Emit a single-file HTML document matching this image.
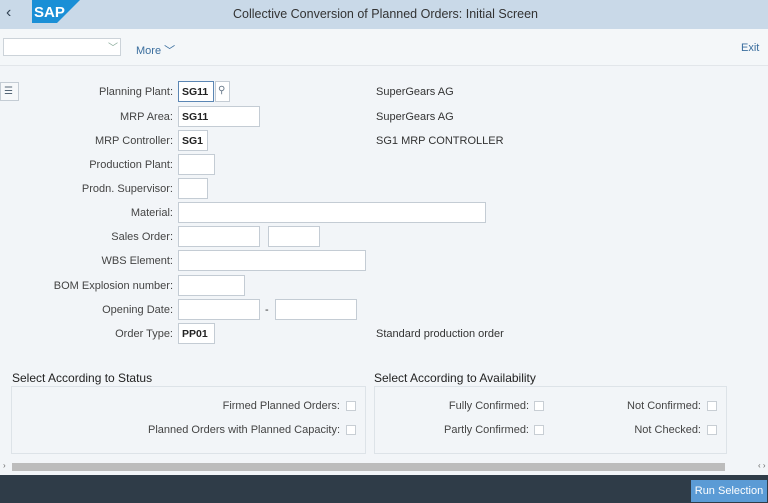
<!DOCTYPE html><html><head><style>
*{box-sizing:border-box;margin:0;padding:0}
body{width:768px;height:503px;overflow:hidden;background:#f2f5f8;font-family:"Liberation Sans",sans-serif;font-size:11px;color:#333;position:relative}
.a{position:absolute}
.hdr{left:0;top:0;width:768px;height:29px;background:#c9d9e8}
.inp{position:absolute;height:21px;background:#fff;border:1px solid #c4ccd4;font-weight:bold;font-size:10.5px;padding:4px 3px;color:#222}
.lbl{position:absolute;text-align:right;width:173px;left:0;color:#444}
.box{position:absolute;border:1px solid #dde3e8;background:#f2f5f8}
.cb{position:absolute;width:10px;height:10px;border:1px solid #c8ced4;background:#fff}
.t{position:absolute;color:#444;text-align:right}
</style></head><body>
<div class="a hdr"></div>
<div class="a" style="left:6px;top:4px;font-size:16px;color:#345">‹</div>
<svg class="a" style="left:32px;top:0" width="48" height="23"><polygon points="0,0 48,0 25,23 0,23" fill="#1a8fd6"/><text x="2" y="17" font-family="Liberation Sans" font-weight="bold" font-size="15" fill="#fff">SAP</text></svg>
<div class="a" style="left:233px;top:7px;font-size:12.5px;color:#333">Collective Conversion of Planned Orders: Initial Screen</div>
<div class="a" style="left:0;top:29px;width:768px;height:37px;background:#f4f7f9;border-bottom:1px solid #e2e6ea"></div>
<div class="a" style="left:3px;top:38px;width:118px;height:18px;background:#fff;border:1px solid #ccd3d9"></div>
<div class="a" style="left:108px;top:39px;color:#8a9;font-size:10px">﹀</div>
<div class="a" style="left:136px;top:42px;color:#3a6e9e;font-size:11px">More ﹀</div>
<div class="a" style="left:741px;top:42px;color:#3a6e9e">Exit</div>
<div class="a" style="left:0;top:82px;width:19px;height:19px;border:1px solid #c4ccd4;background:#f6f8fa;font-size:10px;color:#567;padding:3px">☰</div>
<div class="lbl" style="top:86px">Planning Plant:</div><div class="inp" style="left:178px;top:81px;width:36px;border-color:#5b86b4">SG11</div>
<div class="a" style="left:215px;top:81px;width:15px;height:21px;border:1px solid #c4ccd4;background:#fff;color:#678;font-size:10px;padding:3px 2px">⚲</div>
<div class="a" style="left:376px;top:86px">SuperGears AG</div>
<div class="lbl" style="top:111px">MRP Area:</div><div class="inp" style="left:178px;top:106px;width:82px">SG11</div>
<div class="a" style="left:376px;top:111px">SuperGears AG</div>
<div class="lbl" style="top:135px">MRP Controller:</div><div class="inp" style="left:178px;top:130px;width:30px">SG1</div>
<div class="a" style="left:376px;top:135px">SG1 MRP CONTROLLER</div>
<div class="lbl" style="top:159px">Production Plant:</div><div class="inp" style="left:178px;top:154px;width:37px"></div>
<div class="lbl" style="top:183px">Prodn. Supervisor:</div><div class="inp" style="left:178px;top:178px;width:30px"></div>
<div class="lbl" style="top:207px">Material:</div><div class="inp" style="left:178px;top:202px;width:308px"></div>
<div class="lbl" style="top:231px">Sales Order:</div><div class="inp" style="left:178px;top:226px;width:82px"></div><div class="inp" style="left:268px;top:226px;width:52px"></div>
<div class="lbl" style="top:255px">WBS Element:</div><div class="inp" style="left:178px;top:250px;width:188px"></div>
<div class="lbl" style="top:280px">BOM Explosion number:</div><div class="inp" style="left:178px;top:275px;width:67px"></div>
<div class="lbl" style="top:304px">Opening Date:</div><div class="inp" style="left:178px;top:299px;width:82px"></div><div class="a" style="left:265px;top:304px">-</div><div class="inp" style="left:275px;top:299px;width:82px"></div>
<div class="lbl" style="top:328px">Order Type:</div><div class="inp" style="left:178px;top:323px;width:37px">PP01</div>
<div class="a" style="left:376px;top:328px">Standard production order</div>
<div class="a" style="left:12px;top:371px;font-size:12px;color:#222">Select According to Status</div>
<div class="a" style="left:374px;top:371px;font-size:12px;color:#222">Select According to Availability</div>
<div class="box" style="left:11px;top:386px;width:355px;height:68px"></div>
<div class="box" style="left:374px;top:386px;width:353px;height:68px"></div>
<div class="t" style="right:428px;top:400px">Firmed Planned Orders:</div><div class="cb" style="left:346px;top:401px"></div>
<div class="t" style="right:428px;top:424px">Planned Orders with Planned Capacity:</div><div class="cb" style="left:346px;top:425px"></div>
<div class="t" style="right:239px;top:400px">Fully Confirmed:</div><div class="cb" style="left:534px;top:401px"></div>
<div class="t" style="right:239px;top:424px">Partly Confirmed:</div><div class="cb" style="left:534px;top:425px"></div>
<div class="t" style="right:67px;top:400px">Not Confirmed:</div><div class="cb" style="left:707px;top:401px"></div>
<div class="t" style="right:67px;top:424px">Not Checked:</div><div class="cb" style="left:707px;top:425px"></div>
<div class="a" style="left:12px;top:463px;width:713px;height:8px;background:#bcbcbc"></div>
<div class="a" style="left:3px;top:461px;font-size:8px;color:#666">›</div>
<div class="a" style="left:758px;top:461px;font-size:8px;color:#666">‹ ›</div>
<div class="a" style="left:0;top:475px;width:768px;height:28px;background:#2f3c48"></div>
<div class="a" style="left:691px;top:480px;width:76px;height:22px;background:#5b9bd5;color:#fff;font-size:11px;text-align:center;line-height:22px">Run Selection</div>
</body></html>
